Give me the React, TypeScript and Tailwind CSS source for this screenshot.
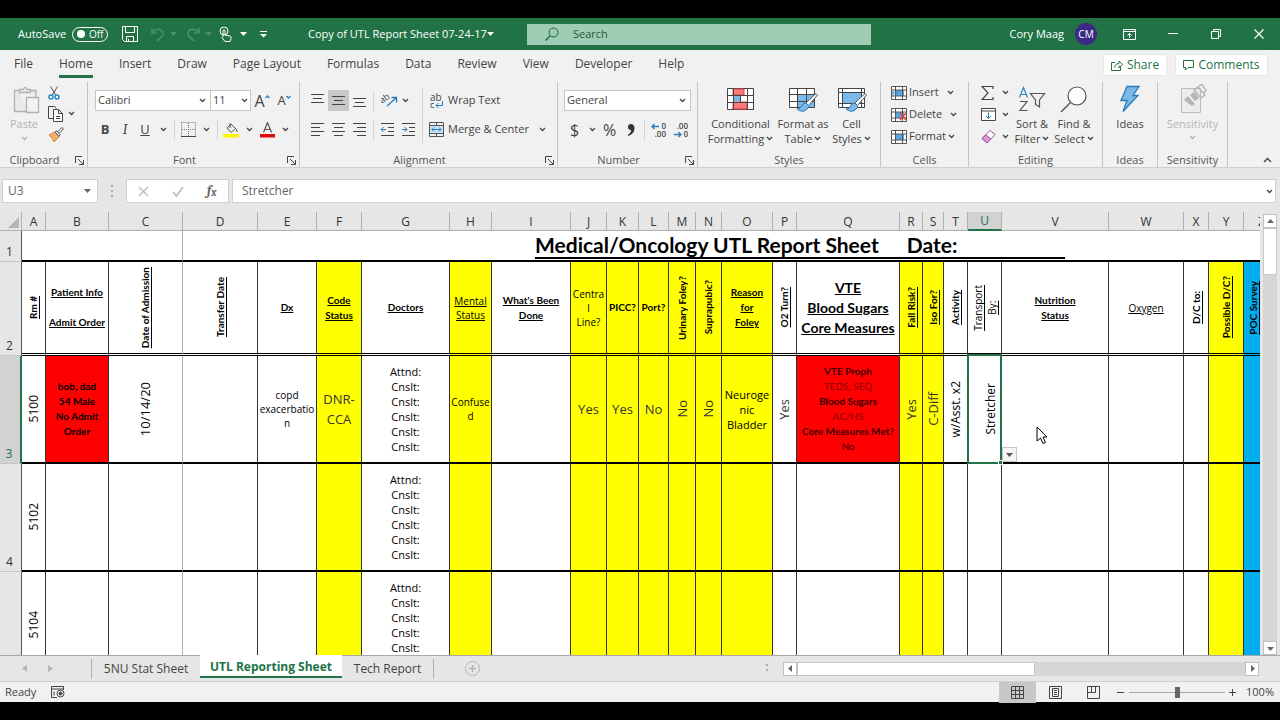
import { useState } from "react";
import type { ReactNode } from "react";
import clsx from "clsx";

interface Column {
  id: string;
  width: number;
  fill?: string;
}

interface CellData {
  text: string;
  style?: string;
  vertical?: boolean;
  fill?: string;
}

const YELLOW = "bg-[#ffff00]";
const RED = "bg-[#ff0000]";

const columns: Column[] = [
  { id: "A", width: 24 },
  { id: "B", width: 63 },
  { id: "C", width: 74 },
  { id: "D", width: 75 },
  { id: "E", width: 59 },
  { id: "F", width: 45, fill: YELLOW },
  { id: "G", width: 88 },
  { id: "H", width: 42, fill: YELLOW },
  { id: "I", width: 79 },
  { id: "J", width: 36, fill: YELLOW },
  { id: "K", width: 32, fill: YELLOW },
  { id: "L", width: 30, fill: YELLOW },
  { id: "M", width: 27, fill: YELLOW },
  { id: "N", width: 26, fill: YELLOW },
  { id: "O", width: 51, fill: YELLOW },
  { id: "P", width: 24 },
  { id: "Q", width: 103 },
  { id: "R", width: 23, fill: YELLOW },
  { id: "S", width: 21, fill: YELLOW },
  { id: "T", width: 24 },
  { id: "U", width: 34 },
  { id: "V", width: 107 },
  { id: "W", width: 75 },
  { id: "X", width: 25 },
  { id: "Y", width: 35, fill: YELLOW },
  { id: "Z", width: 36, fill: "bg-[#00adef]" },
];

const ROW_HEADER_WIDTH = 22;
const tableWidth = columns.reduce((sum, c) => sum + c.width, ROW_HEADER_WIDTH);

const HEAD = "font-['Lato','Open_Sans',sans-serif] text-[10px] leading-[15px] font-bold underline";
const HEAD_PLAIN = "font-['Lato','Open_Sans',sans-serif] text-[10px] leading-[15px] font-bold";
const LIGHT = "text-[10px] leading-[14px]";
const BODY = "text-[12px] leading-[15px]";
const BODY_SOFT = "text-[13px] leading-[15px] text-[#333]";

const headings: Record<string, CellData> = {
  A: { text: "Rm #", style: HEAD, vertical: true },
  B: { text: "Patient Info\n\nAdmit Order", style: HEAD },
  C: { text: "Date of Admission", style: HEAD, vertical: true },
  D: { text: "Transfer Date", style: HEAD, vertical: true },
  E: { text: "Dx", style: HEAD },
  F: { text: "Code\nStatus", style: HEAD },
  G: { text: "Doctors", style: HEAD },
  H: { text: "Mental\nStatus", style: "text-[10px] leading-[14px] underline" },
  I: { text: "What's Been\nDone", style: HEAD },
  J: { text: "Centra\nl\nLine?", style: LIGHT },
  K: { text: "PICC?", style: HEAD_PLAIN },
  L: { text: "Port?", style: HEAD_PLAIN },
  M: { text: "Urinary Foley?", style: HEAD_PLAIN, vertical: true },
  N: { text: "Suprapubic?", style: HEAD_PLAIN, vertical: true },
  O: { text: "Reason\nfor\nFoley", style: HEAD },
  P: { text: "O2 Turn?", style: HEAD, vertical: true },
  Q: {
    text: "VTE\nBlood Sugars\nCore Measures",
    style: "font-['Lato','Open_Sans',sans-serif] text-[14px] leading-[20px] font-bold underline",
  },
  R: { text: "Fall Risk?", style: HEAD, vertical: true },
  S: { text: "Iso For?", style: HEAD, vertical: true },
  T: { text: "Activity", style: HEAD, vertical: true },
  U: { text: "Transport\nBy:", style: "text-[10px] leading-[14px] underline", vertical: true },
  V: { text: "Nutrition\nStatus", style: HEAD },
  W: { text: "Oxygen", style: "text-[10px] leading-[14px] underline" },
  X: { text: "D/C to:", style: HEAD, vertical: true },
  Y: { text: "Possible D/C?", style: HEAD, vertical: true },
  Z: {
    text: "POC Survey",
    style: "font-['Lato','Open_Sans',sans-serif] text-[10px] leading-[15px] font-bold underline mr-4",
    vertical: true,
  },
};

const doctors: CellData = {
  text: "Attnd:\nCnslt:\nCnslt:\nCnslt:\nCnslt:\nCnslt:",
  style: "text-[11px] leading-[15px]",
};

const patients: { row: number; cells: Record<string, CellData> }[] = [
  {
    row: 3,
    cells: {
      A: { text: "5100", style: BODY, vertical: true },
      B: { text: "bob, dad\n54 Male\nNo Admit\nOrder", style: HEAD_PLAIN, fill: RED },
      C: { text: "10/14/20", style: "text-[13px] leading-[15px]", vertical: true },
      E: { text: "copd\nexacerbatio\nn", style: LIGHT },
      F: { text: "DNR-\nCCA", style: "text-[13px] leading-[20px] text-[#333]" },
      G: doctors,
      H: { text: "Confuse\nd", style: LIGHT },
      J: { text: "Yes", style: BODY_SOFT },
      K: { text: "Yes", style: BODY_SOFT },
      L: { text: "No", style: BODY_SOFT },
      M: { text: "No", style: BODY_SOFT, vertical: true },
      N: { text: "No", style: BODY_SOFT, vertical: true },
      O: { text: "Neuroge\nnic\nBladder", style: "text-[11px] leading-[15px]" },
      P: { text: "Yes", style: BODY_SOFT, vertical: true },
      Q: { text: "", fill: RED },
      R: { text: "Yes", style: BODY_SOFT, vertical: true },
      S: { text: "C-Diff", style: BODY_SOFT, vertical: true },
      T: { text: "w/Asst. x2", style: BODY, vertical: true },
      U: { text: "Stretcher", style: "text-[12px] leading-[15px] ml-3", vertical: true },
    },
  },
  { row: 4, cells: { A: { text: "5102", style: BODY, vertical: true }, G: doctors } },
  { row: 5, cells: { A: { text: "5104", style: BODY, vertical: true }, G: doctors } },
];

const menuTabs = [
  "File",
  "Home",
  "Insert",
  "Draw",
  "Page Layout",
  "Formulas",
  "Data",
  "Review",
  "View",
  "Developer",
  "Help",
];

function Icon({
  w,
  h,
  children,
  className,
}: {
  w: number;
  h: number;
  children: ReactNode;
  className?: string;
}) {
  return (
    <svg
      width={w}
      height={h}
      viewBox={`0 0 ${w} ${h}`}
      fill="none"
      stroke="currentColor"
      aria-hidden="true"
      className={clsx("shrink-0", className)}
    >
      {children}
    </svg>
  );
}

function Chevron({ className }: { className?: string }) {
  return (
    <Icon w={7} h={5} className={className}>
      <path d="M1 1l2.5 2.5L6 1" strokeWidth="1.3" />
    </Icon>
  );
}

function Caret({ className }: { className?: string }) {
  return (
    <Icon w={7} h={4} className={className}>
      <path d="M0 0h7L3.5 4z" fill="currentColor" stroke="none" />
    </Icon>
  );
}

function ToolButton({
  label,
  className,
  children,
}: {
  label: string;
  className?: string;
  children: ReactNode;
}) {
  return (
    <button
      type="button"
      aria-label={label}
      className={clsx("flex h-[21px] shrink-0 items-center justify-center", className)}
    >
      {children}
    </button>
  );
}

function Lines({ rows, className }: { rows: [number, number, number][]; className?: string }) {
  return (
    <Icon w={15} h={15} className={className}>
      {rows.map(([y, from, to]) => (
        <path key={y} d={`M${from} ${y}.5H${to}`} />
      ))}
    </Icon>
  );
}

function Group({
  name,
  className,
  launcher,
  children,
}: {
  name: string;
  className: string;
  launcher?: boolean;
  children: ReactNode;
}) {
  return (
    <section
      aria-label={name}
      className={clsx("mt-[2px] flex shrink-0 flex-col border-r border-[#c4c4c4]", className)}
    >
      <div className="flex flex-1">{children}</div>
      <div className="flex h-[14px] items-center">
        <span
          className={clsx(
            "flex-1 text-center text-[11px] leading-[14px] text-[#555]",
            launcher && "pr-1.5"
          )}
        >
          {name}
        </span>
        {launcher && (
          <button type="button" aria-label={`${name} settings`} className="w-3">
            <Icon w={9} h={9}>
              <path d="M.5 7V.5H7M3 3l5 5M8.500 4v4.500H4" />
            </Icon>
          </button>
        )}
      </div>
    </section>
  );
}

function TitleBar() {
  return (
    <header className="flex h-8 shrink-0 items-center bg-[#217346] text-[11px] text-white">
      <div className="flex w-[527px] shrink-0 items-center pl-[18px]">
        <span className="w-[54px]">AutoSave</span>
        <button
          type="button"
          role="switch"
          aria-checked="false"
          className="flex h-[15px] w-9 items-center gap-1 rounded-full border border-white pl-1 text-[10px] leading-3"
        >
          <span className="size-2 rounded-full bg-white" />
          Off
        </button>
        <ToolButton label="Save" className="ml-3 w-5">
          <Icon w={16} h={16}>
            <path d="M.5.5h15v15H2.500l-2-2zM3.500.5v6h9v-6M4.500 15.500v-5h7v5M6.500 13v2" />
          </Icon>
        </ToolButton>
        <ToolButton label="Undo" className="ml-1.5 w-6 text-[#4a8f69]">
          <Icon w={16} h={16}>
            <path d="M2 2v5h5M2 7c3-5 11-5 11 1 0 3-3 4-6 7" strokeWidth="1.600" />
          </Icon>
        </ToolButton>
        <Caret className="text-[#4a8f69]" />
        <ToolButton label="Redo" className="ml-1 w-6 text-[#4a8f69]">
          <Icon w={16} h={16}>
            <path d="M14 2v5H9M14 7C11 2 3 2 3 8c0 3 3 4 6 7" strokeWidth="1.600" />
          </Icon>
        </ToolButton>
        <Caret className="text-[#4a8f69]" />
        <ToolButton label="Touch mode" className="ml-1 w-5">
          <Icon w={14} h={16}>
            <circle cx="5" cy="5" r="4" />
            <path d="M4 11V4.500q1-1.500 2 0V9l5 1q1.500 1 1 3l-1 2.500H6L2.500 11" />
          </Icon>
        </ToolButton>
        <Caret className="ml-1" />
        <ToolButton label="Customize toolbar" className="ml-1.5 w-5">
          <Icon w={7} h={7}>
            <path d="M0 .5h7" />
            <path d="M0 3h7L3.500 6.500z" fill="currentColor" stroke="none" />
          </Icon>
        </ToolButton>
        <h1 className="ml-[35px] flex items-center whitespace-nowrap">
          Copy of UTL Report Sheet 07-24-17 <Caret />
        </h1>
      </div>
      <label className="flex h-[21px] flex-1 items-center bg-[#9fcdb3] pl-[18px] text-[#185c37]">
        <Icon w={14} h={14}>
          <circle cx="8.500" cy="5.500" r="4.500" />
          <path d="M5 9L.5 13.500" strokeWidth="1.300" />
        </Icon>
        <input
          type="text"
          aria-label="Search"
          placeholder="Search"
          className="ml-3.5 min-w-0 flex-1 bg-transparent text-[11px] outline-none placeholder:text-[#21593b]"
        />
      </label>
      <div className="flex w-[409px] shrink-0 items-center justify-end">
        <span>Cory Maag</span>
        <span className="ml-[11px] flex size-[22px] items-center justify-center rounded-full bg-[#3b2a83] text-[10px]">
          CM
        </span>
        <ToolButton label="Ribbon display options" className="ml-[11px] w-[43px]">
          <Icon w={13} h={11}>
            <path d="M.5.5h12v10H.5zM.5 2.500h12M6.500 9V4.500M4.500 6.500l2-2 2 2" />
          </Icon>
        </ToolButton>
        <ToolButton label="Minimize" className="w-[43px]">
          <Icon w={10} h={2}>
            <path d="M0 .5h10" />
          </Icon>
        </ToolButton>
        <ToolButton label="Restore" className="w-[43px]">
          <Icon w={10} h={10}>
            <path d="M.5 2.500h7v7h-7zM2.500 2.500v-2h7v7h-2" />
          </Icon>
        </ToolButton>
        <ToolButton label="Close" className="w-[43px]">
          <Icon w={10} h={10}>
            <path d="M.5.5l9 9M9.500.5l-9 9" strokeWidth="1.200" />
          </Icon>
        </ToolButton>
      </div>
    </header>
  );
}

function MenuBar() {
  return (
    <nav className="flex h-[30px] shrink-0 items-center gap-[26px] pl-3.5 text-[12px] text-[#444]">
      {menuTabs.map((tab) => (
        <button
          key={tab}
          type="button"
          className={clsx(
            "h-[25px] border-b-[3px] pt-px whitespace-nowrap",
            tab === "Home" ? "border-[#217346]" : "border-transparent"
          )}
        >
          {tab}
        </button>
      ))}
      <div className="ml-auto flex gap-2 pr-3 text-[#217346]">
        <button
          type="button"
          className="flex h-[22px] w-[64px] items-center justify-center gap-1 rounded-[2px] border border-[#e6e6e6] bg-white"
        >
          <Icon w={12} h={11}>
            <path d="M4 2.500H.5v8h9V7M3.500 7.500C4 5 5.500 3.500 8 3.500V1l3.500 3.500L8 8V5.500" />
          </Icon>
          Share
        </button>
        <button
          type="button"
          className="flex h-[22px] w-[93px] items-center justify-center gap-1 rounded-[2px] border border-[#e6e6e6] bg-white"
        >
          <Icon w={11} h={11}>
            <path d="M.5.5h10v7H5l-2.500 2.500V7.500h-2z" />
          </Icon>
          Comments
        </button>
      </div>
    </nav>
  );
}

function ClipboardGroup() {
  return (
    <Group name="Clipboard" className="w-[88px]" launcher>
      <button
        type="button"
        className="flex w-12 flex-col items-center pt-1 text-[11px] leading-4 text-[#b1b1b1]"
      >
        <Icon w={28} h={30} className="ml-1">
          <path
            d="M16 25.500H2.500v-21h5M18 4.500h6V11M7.500 6.500v-3H11q2-4 4 0h3.500v3z"
            fill="#e9e9e9"
            strokeWidth="1.300"
          />
          <path d="M14.500 11.500h12v15h-12z" fill="#f3f2f1" strokeWidth="1.300" />
        </Icon>
        Paste
        <Chevron className="mt-1" />
      </button>
      <div className="flex flex-col">
        <ToolButton label="Cut" className="w-3">
          <Icon w={12} h={14}>
            <path d="M2.500.5l5.500 9M9.500.5L4 9.500" stroke="#555" />
            <circle cx="3" cy="11" r="2" stroke="#2b88c9" strokeWidth="1.500" />
            <circle cx="9" cy="11" r="2" stroke="#2b88c9" strokeWidth="1.500" />
          </Icon>
        </ToolButton>
        <ToolButton label="Copy" className="gap-1">
          <Icon w={16} h={16}>
            <path d="M5 12.500H.5V.5h6l2 2" stroke="#444" />
            <path d="M5.500 3.500h5l4 4v8h-9zM10.500 3.500v4h4M8 10.500h4M8 12.500h4" stroke="#444" fill="#fff" />
          </Icon>
          <Chevron />
        </ToolButton>
        <ToolButton label="Format painter" className="w-4">
          <Icon w={16} h={15}>
            <path d="M1 8l6-3 4 5-5 5q-1-4-5-7z" fill="#f0b469" stroke="#c98a3c" />
            <path d="M7 5l2-1 3 3.500-1 2zM10 4.500l4-4 1.500 1.500-4 4" stroke="#555" fill="#fff" />
          </Icon>
        </ToolButton>
      </div>
    </Group>
  );
}

function FontGroup() {
  return (
    <Group name="Font" className="w-[212px]" launcher>
      <div className="flex flex-col gap-2 pt-2 pl-[7px]">
        <div className="flex items-center">
          <div className="flex h-[21px] w-[116px] items-center border border-[#c6c6c6] bg-white pr-1">
            <select aria-label="Font" className="min-w-0 flex-1 appearance-none pl-0.5 text-[11px] outline-none">
              <option>Calibri</option>
            </select>
            <Chevron />
          </div>
          <div className="-ml-px flex h-[21px] w-[41px] items-center border border-[#c6c6c6] bg-white pr-0.5">
            <select aria-label="Font size" className="min-w-0 flex-1 appearance-none pl-0.5 text-[11px] outline-none">
              <option>11</option>
            </select>
            <Chevron />
          </div>
          <ToolButton label="Increase font size" className="w-[22px] text-[16px]">
            A
            <Icon w={5} h={12} className="text-[#2b7bb9]">
              <path d="M.5 3l2-2 2 2" strokeWidth="1.300" />
            </Icon>
          </ToolButton>
          <ToolButton label="Decrease font size" className="w-[22px] text-[13px]">
            A
            <Icon w={5} h={12} className="text-[#2b7bb9]">
              <path d="M.5 1l2 2 2-2" strokeWidth="1.300" />
            </Icon>
          </ToolButton>
        </div>
        <div className="flex items-center">
          <ToolButton label="Bold" className="w-5 text-[13px] font-bold">
            B
          </ToolButton>
          <ToolButton label="Italic" className="w-5 font-serif text-[14px] italic">
            I
          </ToolButton>
          <ToolButton label="Underline" className="w-5 text-[13px] underline">
            U
          </ToolButton>
          <ToolButton label="Underline style" className="w-4">
            <Chevron />
          </ToolButton>
          <span className="mx-[3px] h-5 border-l border-[#d4d4d4]" />
          <ToolButton label="Borders" className="w-5">
            <Icon w={15} h={15}>
              <path d="M.5.5h14v14M.5.5v14M7.500 1v13M1 7.500h13" stroke="#777" strokeDasharray="1 1" />
              <path d="M0 14.500h15" stroke="#444" />
            </Icon>
          </ToolButton>
          <ToolButton label="Border style" className="w-4">
            <Chevron />
          </ToolButton>
          <span className="mx-[3px] h-5 border-l border-[#d4d4d4]" />
          <ToolButton label="Fill color" className="w-5">
            <Icon w={16} h={16}>
              <path d="M4 6l4-4 4.500 4.500L8 10.500zM7 1v5M12 6q2 1 2 4" stroke="#555" />
              <path d="M0 12h16v3.500H0z" fill="#fdf200" stroke="none" />
            </Icon>
          </ToolButton>
          <ToolButton label="Fill colors" className="w-4">
            <Chevron />
          </ToolButton>
          <ToolButton label="Font color" className="w-5">
            <Icon w={15} h={16}>
              <path d="M3.500 10.500l4-10 4 10M5 7.500h5" stroke="#555" strokeWidth="1.200" />
              <path d="M0 12h15v3.500H0z" fill="#e00b0b" stroke="none" />
            </Icon>
          </ToolButton>
          <ToolButton label="Font colors" className="w-4">
            <Chevron />
          </ToolButton>
        </div>
      </div>
    </Group>
  );
}

function AlignmentGroup() {
  return (
    <Group name="Alignment" className="w-[258px]" launcher>
      <div className="flex flex-col gap-2 pt-2 pl-[7px]">
        <div className="flex items-center">
          <ToolButton label="Top align" className="w-[21px]">
            <Lines rows={[[1, 1, 14], [5, 3, 12], [9, 1, 14]]} />
          </ToolButton>
          <ToolButton label="Middle align" className="w-[21px] bg-[#c8c8c8]">
            <Lines rows={[[3, 1, 14], [7, 3, 12], [11, 1, 14]]} />
          </ToolButton>
          <ToolButton label="Bottom align" className="w-[21px]">
            <Lines rows={[[5, 1, 14], [9, 3, 12], [13, 1, 14]]} />
          </ToolButton>
          <span className="mx-[3px] h-5 border-l border-[#d4d4d4]" />
          <ToolButton label="Orientation" className="w-[35px] gap-1">
            <Icon w={17} h={17}>
              <text x="0" y="9" fontSize="9" fill="#444" stroke="none" transform="rotate(-35 5 9)">
                ab
              </text>
              <path d="M6 14l9-8M10.500 5.500h5v5" stroke="#2b7bb9" strokeWidth="1.300" />
            </Icon>
            <Chevron />
          </ToolButton>
        </div>
        <div className="flex items-center">
          <ToolButton label="Align left" className="w-[21px]">
            <Lines rows={[[1, 1, 14], [5, 1, 10], [9, 1, 14], [13, 1, 10]]} />
          </ToolButton>
          <ToolButton label="Center" className="w-[21px]">
            <Lines rows={[[1, 1, 14], [5, 3, 12], [9, 1, 14], [13, 3, 12]]} />
          </ToolButton>
          <ToolButton label="Align right" className="w-[21px]">
            <Lines rows={[[1, 1, 14], [5, 5, 14], [9, 1, 14], [13, 5, 14]]} />
          </ToolButton>
          <span className="mx-[3px] h-5 border-l border-[#d4d4d4]" />
          <ToolButton label="Decrease indent" className="w-[21px]">
            <Icon w={15} h={15}>
              <path d="M1 1.500h13M8 5.500h6M8 9.500h6M1 13.500h13" />
              <path d="M1 7.500h5M3.500 5L1 7.500 3.500 10" stroke="#2b7bb9" />
            </Icon>
          </ToolButton>
          <ToolButton label="Increase indent" className="w-[21px]">
            <Icon w={15} h={15}>
              <path d="M1 1.500h13M8 5.500h6M8 9.500h6M1 13.500h13" />
              <path d="M1 7.500h5M3.500 5L6 7.500 3.500 10" stroke="#2b7bb9" />
            </Icon>
          </ToolButton>
        </div>
      </div>
      <div className="mt-1.5 ml-[3px] flex h-[55px] flex-col gap-2 border-l border-[#d4d4d4] pt-0.5 pl-1.5 text-[11px]">
        <button type="button" className="flex h-[21px] items-center gap-1">
          <Icon w={15} h={16}>
            <text x="1" y="8" fontSize="10" fill="#444" stroke="none">
              ab
            </text>
            <text x="1" y="15" fontSize="9" fill="#444" stroke="none">
              c
            </text>
            <path d="M13.500 8v4.500H7M9.500 10L7 12.500 9.500 15" stroke="#2b7bb9" />
          </Icon>
          Wrap Text
        </button>
        <button type="button" className="flex h-[21px] items-center gap-1 whitespace-nowrap">
          <Icon w={15} h={15}>
            <path d="M.5.5h14v14H.5zM.5 3.500h14M.5 11.500h14M7.500.5v3M7.500 11.500v3" stroke="#555" />
            <path d="M1 4h13v7H1z" fill="#c5e3f6" stroke="none" />
            <path d="M3 7.500h9M5 5.500l-2 2 2 2M10 5.500l2 2-2 2" stroke="#2b7bb9" />
          </Icon>
          Merge & Center
          <Chevron className="ml-1.5" />
        </button>
      </div>
    </Group>
  );
}

function DecimalIcon({ top, bottom, left }: { top: string; bottom: string; left?: boolean }) {
  return (
    <Icon w={16} h={16}>
      <text x="15" y="7" fontSize="8" fontWeight="600" textAnchor="end" fill="#444" stroke="none">
        {top}
      </text>
      <text x="15" y="15" fontSize="8" fontWeight="600" textAnchor="end" fill="#444" stroke="none">
        {bottom}
      </text>
      {left ? (
        <path d="M1 4.500h7M3.500 2L1 4.500 3.500 7" stroke="#2b7bb9" strokeWidth="1.300" />
      ) : (
        <path d="M1 12.500h7M5.500 10L8 12.500 5.500 15" stroke="#2b7bb9" strokeWidth="1.300" />
      )}
    </Icon>
  );
}

function NumberGroup() {
  return (
    <Group name="Number" className="w-[140px]" launcher>
      <div className="flex flex-1 flex-col gap-2 px-1.5 pt-2">
        <div className="flex h-[21px] items-center border border-[#c6c6c6] bg-white pr-1">
          <select aria-label="Number format" className="min-w-0 flex-1 appearance-none pl-0.5 text-[11px] outline-none">
            <option>General</option>
          </select>
          <Chevron />
        </div>
        <div className="flex items-center">
          <ToolButton label="Currency" className="w-[21px] text-[16px]">
            $
          </ToolButton>
          <ToolButton label="Currency list" className="w-[14px]">
            <Chevron />
          </ToolButton>
          <ToolButton label="Percent" className="w-[21px] text-[16px]">
            %
          </ToolButton>
          <ToolButton label="Comma style" className="w-[22px]">
            <Icon w={8} h={12}>
              <path d="M4 0a3 3 0 1 0 0 6q0 3-3 4.500V12Q7.500 10 7.500 4 7 0 4 0z" fill="#333" stroke="none" />
            </Icon>
          </ToolButton>
          <span className="mx-0.5 h-5 border-l border-[#d4d4d4]" />
          <ToolButton label="Increase decimal" className="w-[23px]">
            <DecimalIcon top="0" bottom=".00" left />
          </ToolButton>
          <ToolButton label="Decrease decimal" className="w-[21px]">
            <DecimalIcon top=".00" bottom="0" />
          </ToolButton>
        </div>
      </div>
    </Group>
  );
}

function BigButton({
  icon,
  lines,
  className,
  chevron = true,
}: {
  icon: ReactNode;
  lines: string[];
  className?: string;
  chevron?: boolean;
}) {
  return (
    <button
      type="button"
      className={clsx(
        "flex flex-col items-center text-[11px] leading-[15px] whitespace-nowrap",
        className
      )}
    >
      <span className="flex h-[34px] items-center">{icon}</span>
      {lines.map((line, i) => (
        <span key={line} className="flex items-center gap-0.5">
          {line}
          {chevron && i === lines.length - 1 && i > 0 && <Chevron />}
        </span>
      ))}
      {chevron && lines.length === 1 && <Chevron className="mt-1" />}
    </button>
  );
}

function Brush() {
  return (
    <>
      <path d="M28 7.500L18 17l2.500 2.500L29.500 9z" fill="#fff" stroke="#555" />
      <path d="M18 17q-4 0-5 4-1 2-4 2 5 4 9 1 3-2 2.500-4.500z" fill="#7db9e8" stroke="#2b7bb9" />
    </>
  );
}

function StylesGroup() {
  return (
    <Group name="Styles" className="w-[183px]">
      <BigButton
        className="w-[85px]"
        lines={["Conditional", "Formatting"]}
        icon={
          <Icon w={28} h={24}>
            <path d="M.5 1.500h26v21H.5z" fill="#fff" stroke="#444" />
            <path d="M6 2h11v6H6zM6 15h14v7H6z" fill="#ff7b7b" stroke="#e03c3c" />
            <path d="M6 8.500h7v6H6z" fill="#7db9e8" stroke="none" />
            <path d="M.5 8.500h26M.5 15.500h26M6.500 1.500v21M20.500 1.500v21M13.500 8v7" stroke="#444" />
          </Icon>
        }
      />
      <BigButton
        className="w-10"
        lines={["Format as", "Table"]}
        icon={
          <Icon w={30} h={27}>
            <path d="M1.500 2.500h25v19h-25z" fill="#fff" stroke="none" />
            <path d="M10 9h16v12H10z" fill="#7db9e8" stroke="none" />
            <path d="M1.500 2.500h25v19h-25zM1.500 8.500h25M1.500 15.500h25M9.500 2.500v19M18.500 2.500v19" stroke="#444" />
            <Brush />
          </Icon>
        }
      />
      <BigButton
        className="w-[57px]"
        lines={["Cell", "Styles"]}
        icon={
          <Icon w={30} h={27}>
            <path d="M1.500 2.500h26v19h-26z" fill="#fff" stroke="#444" />
            <path d="M6 7h18v10H6z" fill="#7db9e8" stroke="none" />
            <path d="M1.500 6.500h26M5.500 2.500v19M1.500 17.500h26M24.500 2.500v19" stroke="#444" />
            <Brush />
          </Icon>
        }
      />
    </Group>
  );
}

function CellsIcon({ kind }: { kind: string }) {
  return (
    <Icon w={16} h={14}>
      <path d="M.5.5h15v13H.5z" fill="#fff" stroke="none" />
      <path d="M4 4h9v6H4z" fill="#5aa7de" stroke="none" />
      <path d="M.5.5h15v13H.5zM.5 4h15M.5 10h15M4.500.5v13M11.500.5v13" stroke="#555" />
      {kind === "Insert" && <path d="M0 7h7M3 4.500L.5 7 3 9.500" stroke="#2b7bb9" />}
      {kind === "Delete" && <path d="M9 5l6 7M15 5l-6 7" stroke="#e03c3c" strokeWidth="1.500" />}
    </Icon>
  );
}

function CellsGroup() {
  return (
    <Group name="Cells" className="w-[88px]">
      <div className="flex flex-col gap-px pl-[10px] text-[11px]">
        {["Insert", "Delete", "Format"].map((kind) => (
          <button key={kind} type="button" className="flex h-[21px] items-center gap-0.5">
            <CellsIcon kind={kind} />
            <span>{kind}</span>
            <Chevron className={kind === "Format" ? "" : "ml-1.5"} />
          </button>
        ))}
      </div>
    </Group>
  );
}

function EditingGroup() {
  return (
    <Group name="Editing" className="w-[134px]">
      <div className="flex w-[42px] flex-col gap-px pl-[9px]">
        <ToolButton label="AutoSum" className="gap-2">
          <Icon w={13} h={14}>
            <path d="M12 3V.5H1L7 7l-6 6.500h11V11" strokeWidth="1.200" />
          </Icon>
          <Chevron />
        </ToolButton>
        <ToolButton label="Fill" className="gap-1.5">
          <Icon w={15} h={13}>
            <path d="M.5.5h14v12H.5zM.5 3h14" stroke="#444" fill="#fff" />
            <path d="M7.500 4.500v6M5 8l2.500 2.500L10 8" stroke="#2b7bb9" />
          </Icon>
          <Chevron />
        </ToolButton>
        <ToolButton label="Clear" className="gap-1.5">
          <Icon w={15} h={14}>
            <path d="M1 8.500l8-8 5 4-8 8.500z" fill="#fff" stroke="#a64ca6" />
            <path d="M1 8.500L5 5l5 4-4 4z" fill="#d79bd7" stroke="#a64ca6" />
          </Icon>
          <Chevron />
        </ToolButton>
      </div>
      <BigButton
        className="w-[42px]"
        lines={["Sort &", "Filter"]}
        icon={
          <Icon w={28} h={26}>
            <path d="M1.500 11.500L5.500 1.500l4 10M3 8.500h5" stroke="#2b88c9" strokeWidth="1.200" />
            <path d="M2 15.500h7l-7 9h7.500M12.500 7.500h14l-5 6.500v7l-4-2.500V14z" stroke="#555" strokeWidth="1.200" />
          </Icon>
        }
      />
      <BigButton
        className="w-[42px]"
        lines={["Find &", "Select"]}
        icon={
          <Icon w={28} h={28}>
            <circle cx="17" cy="11" r="9" fill="#fff" stroke="#555" strokeWidth="1.200" />
            <path d="M10.500 17.500L1 27" stroke="#555" strokeWidth="1.400" />
          </Icon>
        }
      />
    </Group>
  );
}

function Ribbon() {
  return (
    <div className="flex h-[88px] shrink-0 border-b border-[#d0d0d0] text-[#444]">
      <ClipboardGroup />
      <FontGroup />
      <AlignmentGroup />
      <NumberGroup />
      <StylesGroup />
      <CellsGroup />
      <EditingGroup />
      <Group name="Ideas" className="w-[55px]">
        <BigButton
          className="w-full"
          lines={["Ideas"]}
          chevron={false}
          icon={
            <Icon w={22} h={28}>
              <path d="M8 1.500h12l-6 9h5L4 26.500l4-11H2z" fill="#7db9e8" stroke="#2b7bb9" strokeWidth="1.300" />
            </Icon>
          }
        />
      </Group>
      <Group name="Sensitivity" className="w-[70px]">
        <BigButton
          className="w-full text-[#b5b5b5]"
          lines={["Sensitivity"]}
          icon={
            <Icon w={28} h={30}>
              <path d="M2.500 4.500h19v24h-19z" fill="#ececec" stroke="#bbb" />
              <path d="M5 16l4-4 7 8-3 2zM11 11l4-3 5 6-4 3z" fill="#b5b5b5" stroke="none" />
              <path d="M15 6l4-3 7 8-4 3zM20 2l3-1.500 4 6-2 2" stroke="#b5b5b5" strokeWidth="1.500" />
            </Icon>
          }
        />
      </Group>
      <button type="button" aria-label="Collapse ribbon" className="mt-auto mr-2 mb-1 ml-auto">
        <Icon w={9} h={6}>
          <path d="M1 5l3.500-3.500L8 5" strokeWidth="1.400" />
        </Icon>
      </button>
    </div>
  );
}

function FormulaBar() {
  const [formula, setFormula] = useState("Stretcher");

  return (
    <div className="flex h-[44px] shrink-0 items-center px-0.5 pt-0.5 text-[12px] text-[#666]">
      <div className="flex h-6 w-24 items-center border border-[#d0d0d0] bg-white pr-1.5">
        <input
          aria-label="Name box"
          defaultValue="U3"
          className="min-w-0 flex-1 pl-[5px] outline-none"
        />
        <Caret />
      </div>
      <Icon w={2} h={14} className="mx-[13px] text-[#aaa]">
        <path d="M1 1v12" strokeWidth="2" strokeDasharray="2 3" />
      </Icon>
      <div className="flex h-6 w-[103px] items-center justify-around border border-[#d0d0d0] bg-white">
        <ToolButton label="Cancel">
          <Icon w={11} h={11} className="text-[#bbb]">
            <path d="M1 1l9 9M10 1l-9 9" strokeWidth="1.300" />
          </Icon>
        </ToolButton>
        <ToolButton label="Enter">
          <Icon w={12} h={11} className="text-[#bbb]">
            <path d="M1 6l3.500 4L11 1" strokeWidth="1.600" />
          </Icon>
        </ToolButton>
        <ToolButton label="Insert function" className="font-serif text-[13px] italic">
          <span className="font-bold">f</span>
          <span className="pt-1 text-[11px] font-bold">x</span>
        </ToolButton>
      </div>
      <div className="mr-0.5 ml-[3px] flex h-6 flex-1 items-center border border-[#d0d0d0] bg-white pr-0.5">
        <input
          aria-label="Formula bar"
          value={formula}
          onChange={(e) => setFormula(e.target.value)}
          className="min-w-0 flex-1 pl-[9px] outline-none"
        />
        <Chevron className="text-[#444]" />
      </div>
    </div>
  );
}

function CellText({ cell }: { cell: CellData }) {
  return (
    <div className="flex items-center justify-center">
      <span
        className={clsx(
          "text-center whitespace-pre",
          cell.vertical && "rotate-180 [writing-mode:vertical-rl]",
          cell.style
        )}
      >
        {cell.text}
      </span>
    </div>
  );
}

function CareSummary() {
  return (
    <div className="text-center font-['Lato','Open_Sans',sans-serif] text-[10px] leading-[15px] whitespace-nowrap text-[#3c0000]">
      <p className="font-bold">VTE Proph</p>
      <p className="text-[#8a0000]">TEDS, SEQ</p>
      <p className="font-bold">Blood Sugars</p>
      <p className="text-[#8a0000]">AC/HS</p>
      <p className="font-bold">Core Measures Met?</p>
      <p>No</p>
    </div>
  );
}

function Selection() {
  return (
    <>
      <div className="pointer-events-none absolute -inset-x-px -top-0.5 -bottom-0.5 z-10 border-2 border-[#217346]" />
      <div className="absolute -right-0.5 -bottom-[3px] z-10 size-[5px] border border-white bg-[#217346]" />
      <button
        type="button"
        aria-label="Choose transport"
        className="absolute bottom-0 left-full z-10 ml-px flex h-[15px] w-[15px] items-center justify-center border border-[#c6c6c6] bg-[#f5f5f5] text-[#555]"
      >
        <Caret />
      </button>
      <svg
        width="12"
        height="19"
        viewBox="0 0 12 19"
        aria-hidden="true"
        className="absolute top-[70px] left-[68px] z-10"
      >
        <path d="M1 1v14l3.500-3 2.500 5.500 2.500-1-2.500-5.500h4z" fill="#fff" stroke="#000" />
      </svg>
    </>
  );
}

function columnEdge(id: string) {
  return id === "C" ? "border-r-[#b0b0b0]" : "border-r-[#333]";
}

function RowHeader({ row, active }: { row: number; active?: boolean }) {
  return (
    <th
      scope="row"
      className={clsx(
        "border-r border-b border-b-[#c6c6c6] pr-0.5 pb-0.5 text-center align-bottom text-[12px] leading-[15px] font-normal",
        active
          ? "border-r-2 border-r-[#217346] bg-[#d2d2d2] text-[#217346]"
          : "border-r-[#555] bg-[#e6e6e6] text-[#333]"
      )}
    >
      {row}
    </th>
  );
}

function Sheet() {
  return (
    <table
      className="table-fixed border-separate border-spacing-0 bg-white text-black"
      style={{ width: tableWidth }}
    >
      <colgroup>
        <col style={{ width: ROW_HEADER_WIDTH }} />
        {columns.map((c) => (
          <col key={c.id} style={{ width: c.width }} />
        ))}
      </colgroup>
      <thead>
        <tr className="h-[19px] bg-[#e6e6e6] text-[12px] leading-[17px]">
          <th className="border-r border-b border-[#b0b0b0] p-0">
            <Icon w={11} h={11} className="mt-0.5 ml-2">
              <path d="M11 0v11H0z" fill="#b5b5b5" stroke="none" />
            </Icon>
          </th>
          {columns.map((c) => (
            <th
              key={c.id}
              scope="col"
              className={clsx(
                "border-r p-0 font-normal",
                c.id === "U"
                  ? "border-b-2 border-r-[#b0b0b0] border-b-[#217346] bg-[#d2d2d2] text-[#217346]"
                  : "border-b border-[#b0b0b0] text-[#333]"
              )}
            >
              {c.id}
            </th>
          ))}
        </tr>
      </thead>
      <tbody>
        <tr className="h-[31px]">
          <RowHeader row={1} />
          <td colSpan={3} className="border-r border-b-2 border-r-[#b0b0b0] border-b-black p-0" />
          <td colSpan={5} className="border-b-2 border-black p-0" />
          <td colSpan={18} className="border-b-2 border-black p-0 pl-[43px]">
            <div className="flex h-[27px] w-[530px] items-end gap-7 border-b-2 border-black font-['Lato','Open_Sans',sans-serif] text-[21px] leading-6 font-bold whitespace-nowrap">
              <span>Medical/Oncology UTL Report Sheet</span>
              <span>Date:</span>
            </div>
          </td>
        </tr>
        <tr className="h-[94px]">
          <RowHeader row={2} />
          {columns.map((c) => (
            <td
              key={c.id}
              className={clsx(
                "border-r border-b-[3px] border-b-black p-0 [border-bottom-style:double]",
                columnEdge(c.id),
                c.fill
              )}
            >
              <CellText cell={headings[c.id]} />
            </td>
          ))}
        </tr>
        {patients.map(({ row, cells }) => (
          <tr key={row} className="h-[108px]">
            <RowHeader row={row} active={row === 3} />
            {columns.map((c) => {
              const cell = cells[c.id];
              const selected = row === 3 && c.id === "U";
              return (
                <td
                  key={c.id}
                  className={clsx(
                    "border-r border-b-2 border-b-black p-0",
                    columnEdge(c.id),
                    cell?.fill ?? c.fill,
                    selected && "relative"
                  )}
                >
                  {row === 3 && c.id === "Q" ? <CareSummary /> : cell && <CellText cell={cell} />}
                  {selected && <Selection />}
                </td>
              );
            })}
          </tr>
        ))}
      </tbody>
    </table>
  );
}

function ArrowButton({ label, d }: { label: string; d: string }) {
  return (
    <button
      type="button"
      aria-label={label}
      className="flex size-[14px] shrink-0 items-center justify-center border border-[#c0c0c0] bg-white text-[#666]"
    >
      <Icon w={7} h={7}>
        <path d={d} fill="currentColor" stroke="none" />
      </Icon>
    </button>
  );
}

function SheetTabs() {
  return (
    <div className="flex h-[26px] shrink-0 items-center border-t border-[#a8a8a8] bg-[#e6e6e6] text-[12px] text-[#444]">
      <div className="flex h-5 w-[92px] items-center gap-[21px] border-r border-[#b0b0b0] pl-[22px] text-[#b5b5b5]">
        <Icon w={5} h={7}>
          <path d="M5 0v7L0 3.500z" fill="currentColor" stroke="none" />
        </Icon>
        <Icon w={5} h={7}>
          <path d="M0 0v7l5-3.500z" fill="currentColor" stroke="none" />
        </Icon>
      </div>
      <button type="button" className="w-[108px] whitespace-nowrap">
        5NU Stat Sheet
      </button>
      <button
        type="button"
        className="-mt-px mb-[3px] h-[23px] w-[142px] border-b-2 border-[#217346] bg-white pt-0.5 font-bold whitespace-nowrap text-[#217346]"
      >
        UTL Reporting Sheet
      </button>
      <button type="button" className="h-5 w-[92px] border-r border-[#b0b0b0] whitespace-nowrap">
        Tech Report
      </button>
      <button type="button" aria-label="New sheet" className="ml-[31px] text-[#b5b5b5]">
        <Icon w={15} h={15}>
          <circle cx="7.500" cy="7.500" r="7" />
          <path d="M7.500 4v7M4 7.500h7" strokeWidth="1.500" />
        </Icon>
      </button>
      <Icon w={2} h={12} className="mr-[15px] ml-auto text-[#aaa]">
        <path d="M1 1v10" strokeWidth="2" strokeDasharray="2 3" />
      </Icon>
      <div className="mr-[21px] flex h-[14px] w-[476px] bg-[#d6d6d6]">
        <ArrowButton label="Scroll left" d="M5 0v7L1 3.500z" />
        <div className="w-1/2 border border-[#c6c6c6] bg-white" />
        <span className="flex-1" />
        <ArrowButton label="Scroll right" d="M2 0v7l4-3.500z" />
      </div>
    </div>
  );
}

function StatusBar() {
  const [zoom, setZoom] = useState(100);

  return (
    <footer className="flex h-[21px] shrink-0 items-center border-t border-[#d0d0d0] bg-[#f1f1f1] text-[11px] text-[#444]">
      <span className="w-[51px] pl-[5px]">Ready</span>
      <Icon w={14} h={12}>
        <path d="M6 11.500H.5V.5h12V4M.5 3h12M3 5.500v4" />
        <circle cx="9.500" cy="7.500" r="3.500" fill="#f1f1f1" />
        <circle cx="9.500" cy="7.500" r="1.500" fill="currentColor" />
      </Icon>
      <div className="ml-auto flex items-center">
        <ToolButton label="Normal view" className="w-[37px] bg-[#c8c8c8]">
          <Icon w={13} h={13}>
            <path d="M.5.5h12v12H.5zM.5 4.500h12M.5 8.500h12M4.500.5v12M8.500.5v12" />
          </Icon>
        </ToolButton>
        <ToolButton label="Page layout view" className="w-[38px]">
          <Icon w={13} h={13}>
            <path d="M.5.5h12v12H.5zM3.500 2.500h6v8h-6zM5 4.500h3M5 6.500h3M5 8.500h3" />
          </Icon>
        </ToolButton>
        <ToolButton label="Page break view" className="w-[38px]">
          <Icon w={13} h={13}>
            <path d="M.5.5h12v12H.5zM4.500.5v6h4v-6M.5 6.500h4" />
          </Icon>
        </ToolButton>
        <ToolButton label="Zoom out" className="w-[17px]">
          <Icon w={7} h={7}>
            <path d="M0 3.500h7" />
          </Icon>
        </ToolButton>
        <input
          type="range"
          aria-label="Zoom"
          min={0}
          max={200}
          value={zoom}
          onChange={(e) => setZoom(Number(e.target.value))}
          className="h-3 w-24 appearance-none bg-transparent [&::-webkit-slider-runnable-track]:h-px [&::-webkit-slider-runnable-track]:bg-[#a8a8a8] [&::-webkit-slider-thumb]:-mt-[5px] [&::-webkit-slider-thumb]:h-[11px] [&::-webkit-slider-thumb]:w-[5px] [&::-webkit-slider-thumb]:appearance-none [&::-webkit-slider-thumb]:bg-[#666]"
        />
        <ToolButton label="Zoom in" className="w-[14px]">
          <Icon w={7} h={7}>
            <path d="M0 3.500h7M3.500 0v7" />
          </Icon>
        </ToolButton>
        <span className="w-[41px] pr-1.5 text-right">{zoom}%</span>
      </div>
    </footer>
  );
}

export default function App() {
  return (
    <div className="flex h-screen flex-col overflow-hidden bg-black py-[18px] font-['Open_Sans','Noto_Sans',sans-serif]">
      <TitleBar />
      <div className="flex shrink-0 flex-col bg-[#f1f1f1]">
        <MenuBar />
        <Ribbon />
      </div>
      <div className="flex min-h-0 flex-1 flex-col bg-[#e6e6e6]">
        <FormulaBar />
        <div className="flex min-h-0 flex-1">
          <main className="min-w-0 flex-1 overflow-hidden">
            <Sheet />
          </main>
          <div className="flex w-5 flex-col items-center pt-0.5">
            <ArrowButton label="Scroll up" d="M0 5h7L3.500 1z" />
            <div className="flex w-[14px] flex-1 flex-col bg-[#d6d6d6]">
              <div className="h-[47px] border border-[#c6c6c6] bg-white" />
            </div>
            <ArrowButton label="Scroll down" d="M0 2h7L3.500 6z" />
          </div>
        </div>
        <SheetTabs />
      </div>
      <StatusBar />
    </div>
  );
}
